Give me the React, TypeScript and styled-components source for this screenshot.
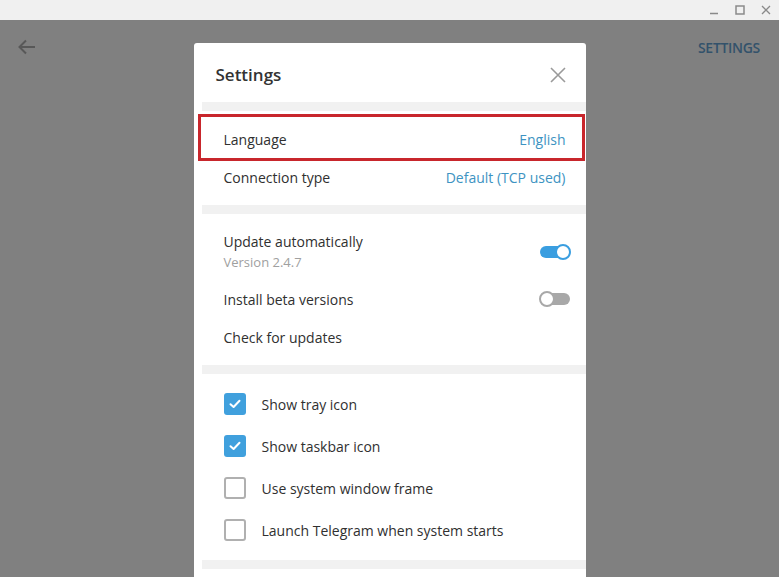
import React, { useState } from 'react'
import styled, { createGlobalStyle } from 'styled-components'

const GlobalStyle = createGlobalStyle`
  html, body {
    margin: 0;
    padding: 0;
    background: #808080;
  }
  * {
    box-sizing: border-box;
  }
`

const Window = styled.div`
  width: 779px;
  height: 577px;
  display: flex;
  flex-direction: column;
  overflow: hidden;
  font-family: "Open Sans", "Noto Sans", sans-serif;
  color: #303030;
`

const TitleBar = styled.div`
  height: 20px;
  flex-shrink: 0;
  background: #f0f0f0;
  display: flex;
  justify-content: flex-end;
  align-items: center;
  gap: 10px;
  padding-right: 5px;
`

const WinButton = styled.div`
  width: 16px;
  height: 16px;
  display: flex;
  align-items: center;
  justify-content: center;
  color: #8a8a8a;
`

const Main = styled.div`
  position: relative;
  flex: 1;
  background: #808080;
`

const TopBar = styled.div`
  height: 54px;
  display: flex;
  align-items: center;
  justify-content: space-between;
  padding: 0 19px 0 16px;
`

const BackButton = styled.div`
  display: flex;
  align-items: center;
  color: #585858;
`

const TopTitle = styled.div`
  font-size: 14px;
  font-weight: 600;
  color: #33526b;
  letter-spacing: -0.3px;
`

const Overlay = styled.div`
  position: absolute;
  inset: 0;
  display: flex;
  justify-content: center;
  padding-top: 23px;
`

const Modal = styled.div`
  width: 392px;
  height: 600px;
  background: #ffffff;
  border-radius: 3px;
  overflow: hidden;
`

const Header = styled.div`
  display: flex;
  align-items: center;
  justify-content: space-between;
  padding: 20px 19px 15px 22px;
`

const ModalTitle = styled.div`
  font-size: 17px;
  line-height: 24px;
  font-weight: 600;
  color: #333;
`

const CloseButton = styled.div`
  display: flex;
  color: #9a9a9a;
`

const Divider = styled.div`
  height: 9px;
  margin-left: 8px;
  background: #f1f1f1;
`

const Section = styled.div<{ $top: number; $bottom: number }>`
  display: flex;
  flex-direction: column;
  padding: ${p => p.$top}px 0 ${p => p.$bottom}px;
`

const Row = styled.div<{ $height?: number; $highlight?: boolean }>`
  position: relative;
  height: ${p => p.$height ?? 38}px;
  display: flex;
  align-items: center;
  justify-content: space-between;
  padding: 0 20px 0 30px;
  font-size: 14px;

  ${p => p.$highlight && `
    &::after {
      content: '';
      position: absolute;
      left: 4px;
      right: 1px;
      top: -6px;
      bottom: -3px;
      border: 3px solid #c8262c;
    }
  `}
`

const Value = styled.span`
  color: #3d93c2;
`

const ToggleRow = styled(Row)`
  padding-right: 15px;
`

const UpdateBlock = styled.div`
  display: flex;
  align-items: center;
  justify-content: space-between;
  padding: 0 15px 0 30px;
  margin-bottom: 8px;
`

const Label = styled.div`
  font-size: 14px;
  line-height: 20px;
`

const SubLabel = styled.div`
  font-size: 13px;
  line-height: 20px;
  color: #a0a0a0;
`

const Track = styled.div<{ $on: boolean }>`
  position: relative;
  width: 32px;
  height: 16px;
  display: flex;
  align-items: center;
  justify-content: ${p => (p.$on ? 'flex-end' : 'flex-start')};
  cursor: pointer;

  &::before {
    content: '';
    position: absolute;
    left: 1px;
    right: 1px;
    top: 2px;
    bottom: 2px;
    border-radius: 6px;
    background: ${p => (p.$on ? '#3a9ee0' : '#a8a8a8')};
  }
`

const Knob = styled.div<{ $on: boolean }>`
  position: relative;
  width: 16px;
  height: 16px;
  border-radius: 50%;
  background: #fff;
  border: 2px solid ${p => (p.$on ? '#3a9ee0' : '#a8a8a8')};
`

const CheckRow = styled.label`
  height: 42px;
  display: flex;
  align-items: center;
  gap: 16px;
  padding-left: 30px;
  font-size: 14px;
  cursor: pointer;
`

const Box = styled.div<{ $checked: boolean }>`
  width: 22px;
  height: 22px;
  border-radius: 3px;
  display: flex;
  align-items: center;
  justify-content: center;
  background: ${p => (p.$checked ? '#40a0dd' : '#fff')};
  border: ${p => (p.$checked ? 'none' : '2px solid #b0b0b0')};
`

function Toggle({ on, onClick }: { on: boolean; onClick: () => void }) {
  return (
    <Track $on={on} onClick={onClick}>
      <Knob $on={on} />
    </Track>
  )
}

function Checkbox({ checked, label, onToggle }: { checked: boolean; label: string; onToggle: () => void }) {
  return (
    <CheckRow onClick={onToggle}>
      <Box $checked={checked}>
        {checked && (
          <svg width="12" height="10" viewBox="0 0 12 10">
            <path d="M1.5 5.2 L4.6 8 L10.5 1.8" fill="none" stroke="#fff" strokeWidth="2" strokeLinecap="round" strokeLinejoin="round" />
          </svg>
        )}
      </Box>
      {label}
    </CheckRow>
  )
}

export default function App() {
  const [autoUpdate, setAutoUpdate] = useState(true)
  const [beta, setBeta] = useState(false)
  const [checks, setChecks] = useState([true, true, false, false])

  const labels = ['Show tray icon', 'Show taskbar icon', 'Use system window frame', 'Launch Telegram when system starts']

  return (
    <Window>
      <GlobalStyle />
      <TitleBar>
        <WinButton>
          <svg width="10" height="10" viewBox="0 0 10 10">
            <path d="M1 8.5 H9" stroke="currentColor" strokeWidth="1.5" />
          </svg>
        </WinButton>
        <WinButton>
          <svg width="10" height="10" viewBox="0 0 10 10">
            <rect x="1" y="1" width="8" height="8" fill="none" stroke="currentColor" strokeWidth="1.5" />
          </svg>
        </WinButton>
        <WinButton>
          <svg width="10" height="10" viewBox="0 0 10 10">
            <path d="M1 1 L9 9 M9 1 L1 9" stroke="currentColor" strokeWidth="1.3" />
          </svg>
        </WinButton>
      </TitleBar>
      <Main>
        <TopBar>
          <BackButton>
            <svg width="22" height="22" viewBox="0 0 22 22">
              <path d="M19 11 H4 M10 4.5 L3.5 11 L10 17.5" fill="none" stroke="currentColor" strokeWidth="2" />
            </svg>
          </BackButton>
          <TopTitle>SETTINGS</TopTitle>
        </TopBar>
        <Overlay>
          <Modal>
            <Header>
              <ModalTitle>Settings</ModalTitle>
              <CloseButton>
                <svg width="18" height="18" viewBox="0 0 18 18">
                  <path d="M2 2 L16 16 M16 2 L2 16" stroke="currentColor" strokeWidth="1.6" />
                </svg>
              </CloseButton>
            </Header>
            <Divider />
            <Section $top={9} $bottom={9}>
              <Row $highlight>
                Language
                <Value>English</Value>
              </Row>
              <Row>
                Connection type
                <Value>Default (TCP used)</Value>
              </Row>
            </Section>
            <Divider />
            <Section $top={18} $bottom={9}>
              <UpdateBlock>
                <div>
                  <Label>Update automatically</Label>
                  <SubLabel>Version 2.4.7</SubLabel>
                </div>
                <Toggle on={autoUpdate} onClick={() => setAutoUpdate(!autoUpdate)} />
              </UpdateBlock>
              <ToggleRow>
                Install beta versions
                <Toggle on={beta} onClick={() => setBeta(!beta)} />
              </ToggleRow>
              <Row>Check for updates</Row>
            </Section>
            <Divider />
            <Section $top={9} $bottom={9}>
              {labels.map((l, i) => (
                <Checkbox
                  key={l}
                  label={l}
                  checked={checks[i]}
                  onToggle={() => setChecks(checks.map((c, j) => (j === i ? !c : c)))}
                />
              ))}
            </Section>
            <Divider />
          </Modal>
        </Overlay>
      </Main>
    </Window>
  )
}
